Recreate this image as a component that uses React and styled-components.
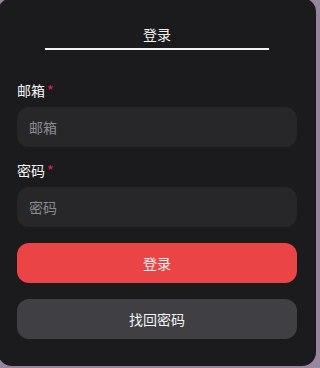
import styled, { createGlobalStyle } from 'styled-components';

const GlobalStyle = createGlobalStyle`
  html, body {
    margin: 0;
    padding: 0;
    background: #97869d;
    overflow: hidden;
  }
  body {
    font-family: "Noto Sans CJK SC", "Noto Sans", sans-serif;
  }
  * {
    box-sizing: border-box;
  }
`;

function Field({ label, placeholder, type = 'text' }) {
  return (
    <FieldWrapper>
      <Label>
        {label}
        <Required>*</Required>
      </Label>
      <Input type={type} placeholder={placeholder} />
    </FieldWrapper>
  );
}

function App() {
  return (
    <>
      <GlobalStyle />
      <Card>
        <Tabs>
          <Tab>登录</Tab>
        </Tabs>

        <Form onSubmit={(e) => e.preventDefault()}>
          <Field label="邮箱" placeholder="邮箱" />
          <Field label="密码" placeholder="密码" type="password" />

          <Actions>
            <Button $variant="primary" type="submit">
              登录
            </Button>
            <Button type="button">找回密码</Button>
          </Actions>
        </Form>
      </Card>
    </>
  );
}

const Card = styled.main`
  margin: -2px 0 0 -2px;
  width: 318px;
  height: 368px;
  padding: 26px 19px 27px;

  background: #1b1a1d;
  border-radius: 14px;

  display: flex;
  flex-direction: column;
`;

const Tabs = styled.nav`
  display: flex;
  justify-content: center;
`;

const Tab = styled.div`
  width: 224px;
  padding-bottom: 4px;
  border-bottom: 2px solid #f4f4f5;

  color: #f4f4f5;
  font-size: 14px;
  line-height: 20px;
  text-align: center;
`;

const Form = styled.form`
  margin-top: 30px;

  display: flex;
  flex-direction: column;
  gap: 13px;
`;

const FieldWrapper = styled.div`
  display: flex;
  flex-direction: column;
  gap: 7px;
`;

const Label = styled.label`
  color: #f4f4f5;
  font-size: 14px;
  line-height: 20px;
`;

const Required = styled.span`
  margin-left: 2px;
  color: #e0245e;
`;

const Input = styled.input`
  height: 40px;
  padding: 0 12px;

  background: #27272a;
  border: none;
  border-radius: 12px;
  outline: none;

  color: #f4f4f5;
  font-family: inherit;
  font-size: 14px;

  &::placeholder {
    color: #8b8b91;
  }
`;

const Actions = styled.div`
  margin-top: 3px;

  display: flex;
  flex-direction: column;
  gap: 16px;
`;

const Button = styled.button`
  height: 40px;

  background: ${(p) => (p.$variant === 'primary' ? '#ea4446' : '#3f3f44')};
  border: none;
  border-radius: 12px;

  color: #f4f4f5;
  font-family: inherit;
  font-size: 14px;
  cursor: pointer;
`;

export default App;
